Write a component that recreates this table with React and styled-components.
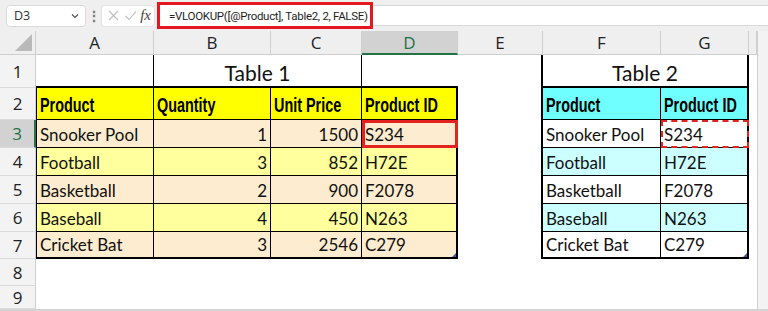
import React from 'react'
import styled, { createGlobalStyle } from 'styled-components'

const GlobalStyle = createGlobalStyle`
  * { box-sizing: border-box; }
  body {
    margin: 0;
    background: #f0f0f0;
    font-family: "Open Sans", "Liberation Sans", sans-serif;
  }
`

const Page = styled.div`
  width: 768px;
  height: 311px;
  overflow: hidden;
  background: #efefef;
`

const TopBar = styled.div`
  height: 31px;
  display: flex;
  align-items: center;
  padding-left: 6px;
`
const NameBox = styled.div`
  width: 80px;
  height: 22px;
  background: white;
  border: 1px solid #dadada;
  border-radius: 4px;
  display: flex;
  align-items: center;
  justify-content: space-between;
  padding: 0 5px 0 7px;
  font-size: 12.5px;
  color: #333;
`
const Dots = styled.div`
  width: 15px;
  text-align: center;
  color: #777;
  font-size: 14px;
  font-weight: bold;
`
const EditBox = styled.div`
  width: 54px;
  height: 22px;
  background: white;
  border: 1px solid #e2e2e2;
  border-radius: 4px;
  display: flex;
  align-items: center;
  justify-content: space-between;
  padding: 0 3px 0 5px;
`
const Fx = styled.span`
  font-family: "Liberation Serif", serif;
  font-style: italic;
  font-size: 15px;
  color: #444;
`
const FormulaArea = styled.div`
  flex: 1;
  display: flex;
  align-items: center;
  margin-left: 2px;
`
const FormulaBox = styled.div`
  width: 216px;
  height: 27px;
  border: 3px solid #e3191f;
  background: white;
  display: flex;
  align-items: center;
  padding-left: 9px;
  font-family: Roboto, "Liberation Sans", sans-serif;
  font-size: 11.5px;
  letter-spacing: -0.3px;
  color: #1e1e1e;
  white-space: nowrap;
  overflow: hidden;
`
const FormulaRest = styled.div`
  flex: 1;
  height: 21px;
  background: white;
  border-top: 1px solid #d8d8d8;
  border-bottom: 1px solid #d8d8d8;
`

const Sheet = styled.div`
  display: grid;
  grid-template-columns: 36px 118px 117px 91px 96px 85px 118px 88px 8px 11px;
  grid-template-rows: 24px 33px 32px 28px 28px 28px 28px 27px 27px 23px;
  background: white;
  border-bottom: 2px solid #d4d4d4;
`

const Corner = styled.div`
  background: #efefef;
  border-right: 1px solid #cfcfcf;
  border-bottom: 1px solid #cfcfcf;
  position: relative;
  &::after {
    content: '';
    position: absolute;
    right: 3px;
    bottom: 3px;
    width: 17px;
    height: 17px;
    background: #b9b9b9;
    clip-path: polygon(100% 0, 100% 100%, 0 100%);
  }
`
const ColHead = styled.div`
  background: ${p => (p.$active ? '#d2d2d2' : '#efefef')};
  color: ${p => (p.$active ? '#217346' : '#222')};
  border-right: 1px solid #cfcfcf;
  border-bottom: ${p => (p.$active ? '2px solid #217346' : '1px solid #cfcfcf')};
  display: flex;
  align-items: center;
  justify-content: center;
  font-size: 17px;
`
const RowHead = styled.div`
  background: ${p => (p.$active ? '#d2d2d2' : '#f3f3f3')};
  color: ${p => (p.$active ? '#217346' : '#222')};
  border-right: ${p => (p.$active ? '2px solid #217346' : '1px solid #cfcfcf')};
  border-bottom: 1px solid #dadada;
  display: flex;
  align-items: center;
  justify-content: center;
  font-size: 17px;
`
const Gutter = styled.div`
  grid-column: 10;
  grid-row: 1 / -1;
  background: #f3f3f3;
  border-left: 1px solid #d0d0d0;
`

const Cell = styled.div`
  grid-column: span ${p => p.$span || 1};
  background: ${p => p.$bg || 'white'};
  border-left: ${p => p.$l || 0}px solid #000;
  border-right: ${p => p.$r || 0}px solid #000;
  border-bottom: ${p => p.$b || 0}px solid #000;
  display: flex;
  align-items: flex-end;
  justify-content: ${p => (p.$align === 'right' ? 'flex-end' : p.$align === 'center' ? 'center' : 'flex-start')};
  padding: 0 3px 2px 3px;
  font-family: Lato, "Liberation Sans", sans-serif;
  font-size: 17px;
  color: #111;
  white-space: nowrap;
  position: relative;
  outline: ${p => (p.$mark ? `${p.$mark === 'dashed' ? 2 : 3}px ${p.$mark} #e2231f` : 'none')};
  outline-offset: ${p => (p.$mark === 'dashed' ? -2 : -3)}px;
  ${p => p.$corner && `
    &::after {
      content: '';
      position: absolute;
      right: 0;
      bottom: 0;
      width: 4px;
      height: 4px;
      background: #4b5aa0;
      clip-path: polygon(100% 0, 100% 100%, 0 100%);
    }
  `}
`
const HeadCell = styled(Cell)`
  padding-bottom: 2px;
`
const HeadText = styled.span`
  display: inline-block;
  font-family: "Liberation Sans", sans-serif;
  font-weight: bold;
  font-size: 20px;
  color: #000;
  transform: scaleX(0.72);
  transform-origin: left bottom;
`
const TitleCell = styled(Cell)`
  font-size: 21px;
  padding-bottom: 1px;
`

const Chevron = () => (
  <svg width="10" height="10" viewBox="0 0 10 10">
    <path d="M2 3.5 L5 6.5 L8 3.5" fill="none" stroke="#555" strokeWidth="1.2" />
  </svg>
)
const Cross = () => (
  <svg width="13" height="13" viewBox="0 0 13 13">
    <path d="M2 2 L11 11 M11 2 L2 11" stroke="#bdbdbd" strokeWidth="1.1" />
  </svg>
)
const Check = () => (
  <svg width="13" height="13" viewBox="0 0 13 13">
    <path d="M1.5 7 L5 10.5 L12 2.5" fill="none" stroke="#bdbdbd" strokeWidth="1.1" />
  </svg>
)

const table1 = [
  ['Snooker Pool', 1, 1500, 'S234'],
  ['Football', 3, 852, 'H72E'],
  ['Basketball', 2, 900, 'F2078'],
  ['Baseball', 4, 450, 'N263'],
  ['Cricket Bat', 3, 2546, 'C279'],
]

const PEACH = '#fdeccf'
const LEMON = '#ffff9e'
const CYAN = '#ccffff'

const Head = ({ children, ...rest }) => (
  <HeadCell {...rest}>
    <HeadText>{children}</HeadText>
  </HeadCell>
)

export default function App() {
  return (
    <Page>
      <GlobalStyle />
      <TopBar>
        <NameBox>
          D3
          <Chevron />
        </NameBox>
        <Dots>⋮</Dots>
        <EditBox>
          <Cross />
          <Check />
          <Fx>fx</Fx>
        </EditBox>
        <FormulaArea>
          <FormulaBox>=VLOOKUP([@Product], Table2, 2, FALSE)</FormulaBox>
          <FormulaRest />
        </FormulaArea>
      </TopBar>

      <Sheet>
        <Gutter />
        <Corner />
        {['A', 'B', 'C', 'D', 'E', 'F', 'G', ''].map((c, i) => (
          <ColHead key={i} $active={c === 'D'}>{c}</ColHead>
        ))}

        <RowHead>1</RowHead>
        <Cell $r={1} $b={2} />
        <TitleCell $span={2} $r={1} $b={2} $align="center">Table 1</TitleCell>
        <Cell $b={2} />
        <Cell $r={2} />
        <TitleCell $span={2} $r={2} $b={2} $align="center">Table 2</TitleCell>
        <Cell />

        <RowHead>2</RowHead>
        <Head $bg="#ffff00" $l={1} $r={1} $b={1}>Product</Head>
        <Head $bg="#ffff00" $r={1} $b={1}>Quantity</Head>
        <Head $bg="#ffff00" $r={1} $b={1}>Unit Price</Head>
        <Head $bg="#ffff00" $r={2} $b={1}>Product ID</Head>
        <Cell $r={2} />
        <Head $bg="#70ffff" $r={1} $b={1}>Product</Head>
        <Head $bg="#70ffff" $r={2} $b={1}>Product ID</Head>
        <Cell />

        {table1.map(([name, qty, price, id], i) => {
          const bg = i % 2 === 0 ? PEACH : LEMON
          const bg2 = i % 2 === 0 ? 'white' : CYAN
          const last = i === table1.length - 1
          const b = last ? 2 : 1
          return (
            <React.Fragment key={name}>
              <RowHead $active={i === 0}>{i + 3}</RowHead>
              <Cell $bg={bg} $l={1} $r={1} $b={b}>{name}</Cell>
              <Cell $bg={bg} $r={1} $b={b} $align="right">{qty}</Cell>
              <Cell $bg={bg} $r={1} $b={b} $align="right">{price}</Cell>
              <Cell $bg={bg} $r={2} $b={b} $mark={i === 0 ? 'solid' : undefined} $corner={last}>{id}</Cell>
              <Cell $r={2} />
              <Cell $bg={bg2} $r={1} $b={b}>{name}</Cell>
              <Cell $bg={bg2} $r={2} $b={b} $mark={i === 0 ? 'dashed' : undefined} $corner={last}>{id}</Cell>
              <Cell />
            </React.Fragment>
          )
        })}

        {[8, 9].map(n => (
          <React.Fragment key={n}>
            <RowHead>{n}</RowHead>
            {Array.from({ length: 8 }).map((_, i) => (
              <Cell key={i} />
            ))}
          </React.Fragment>
        ))}
      </Sheet>
    </Page>
  )
}
